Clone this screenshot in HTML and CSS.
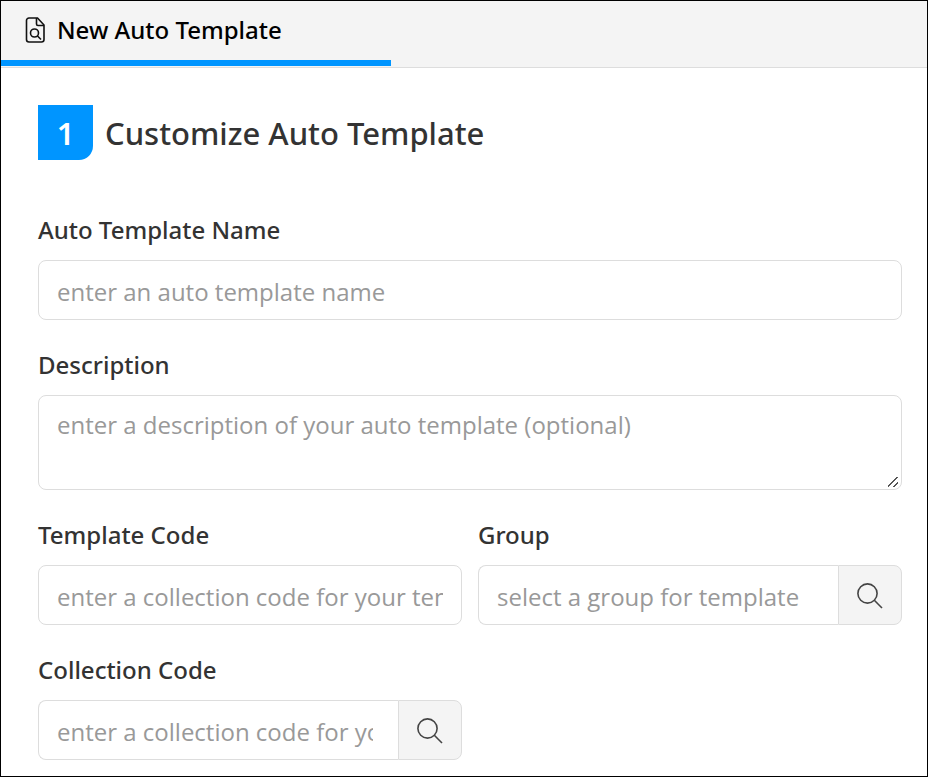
FILE: index.html
```html
<!DOCTYPE html>
<html lang="en">
<head>
  <meta charset="utf-8">
  <meta name="viewport" content="width=device-width, initial-scale=1">
  <title>New Auto Template</title>
  <link rel="stylesheet" href="styles.css">
</head>
<body>
  <div class="panel">
    <header class="tab-bar">
      <h1 class="tab">
        <svg class="tab-icon" viewBox="0 0 20 26" aria-hidden="true">
          <path d="M12.5 1H4a2.5 2.5 0 0 0-2.500 2.500v19A2.500 2.500 0 0 0 4 25h12.500a2.500 2.500 0 0 0 2.500-2.500V8z"/>
          <path d="M11.500 1v6a1.500 1.500 0 0 0 1.500 1.500h6"/>
          <circle cx="9.500" cy="16" r="4"/>
          <path d="M12.500 19l3.500 3.500"/>
        </svg>
        <span>New Auto Template</span>
      </h1>
    </header>
    <main class="content">
      <h2 class="step">
        <span class="step-number">1</span>
        <span>Customize Auto Template</span>
      </h2>
      <form class="form">
        <div class="field field-wide">
          <label for="name">Auto Template Name</label>
          <input class="control" id="name" type="text" placeholder="enter an auto template name">
        </div>
        <div class="field field-wide">
          <label for="description">Description</label>
          <textarea class="control control-area" id="description" placeholder="enter a description of your auto template (optional)"></textarea>
        </div>
        <div class="field">
          <label for="template-code">Template Code</label>
          <input class="control" id="template-code" type="text" placeholder="enter a collection code for your template">
        </div>
        <div class="field">
          <label for="group">Group</label>
          <div class="lookup">
            <input class="control" id="group" type="text" placeholder="select a group for template">
            <button class="lookup-button" type="button" aria-label="Search groups">
              <svg class="search-icon" viewBox="0 0 26 26" aria-hidden="true">
                <circle cx="10.500" cy="11.500" r="9.600"/>
                <path d="M17.300 18.300L25 26"/>
              </svg>
            </button>
          </div>
        </div>
        <div class="field">
          <label for="collection-code">Collection Code</label>
          <div class="lookup">
            <input class="control" id="collection-code" type="text" placeholder="enter a collection code for your template">
            <button class="lookup-button" type="button" aria-label="Search collections">
              <svg class="search-icon" viewBox="0 0 26 26" aria-hidden="true">
                <circle cx="10.500" cy="11.500" r="9.600"/>
                <path d="M17.300 18.300L25 26"/>
              </svg>
            </button>
          </div>
        </div>
      </form>
    </main>
  </div>
</body>
</html>
```
FILE: styles.css
```css
* {
  box-sizing: border-box;
}

body {
  margin: 0;
  background: #fff;
  color: #333;
  font-family: "Noto Sans", "Open Sans", sans-serif;
  font-size: 24px;
  line-height: 34px;
}

h1,
h2 {
  margin: 0;
  font-weight: 500;
}

.panel {
  min-height: 100vh;
  border: 1px solid #000;
}

.tab-bar {
  padding-bottom: 1px;
  border-bottom: 1px solid #ddd;
  background: #f4f4f4;
}

.tab {
  display: flex;
  align-items: center;
  gap: 12px;
  width: 390px;
  max-width: 100%;
  height: 65px;
  padding: 0 24px 1px;
  border-bottom: 6px solid #0095ff;
  color: #000;
  font-size: 24px;
  font-weight: 500;
}

.tab-icon {
  width: 20px;
  height: 26px;
  fill: none;
  stroke: #111;
  stroke-width: 1.6;
}

.content {
  padding: 37px 25px 16px 37px;
}

.step {
  display: flex;
  align-items: center;
  gap: 12px;
  margin-bottom: 53px;
  font-size: 31px;
}

.step-number {
  display: grid;
  place-items: center;
  width: 55px;
  height: 55px;
  border-bottom-right-radius: 14px;
  background: #0095ff;
  color: #fff;
  font-weight: 600;
}

.form {
  display: grid;
  grid-template-columns: repeat(2, minmax(0, 1fr));
  gap: 28px 16px;
}

.field {
  display: flex;
  flex-direction: column;
  gap: 13px;
}

.field-wide {
  grid-column: 1 / -1;
}

.field label {
  font-weight: 500;
}

.control {
  width: 100%;
  min-width: 0;
  height: 60px;
  margin: 0;
  padding: 3px 18px 0;
  border: 1px solid #ddd;
  border-radius: 8px;
  background: #fff;
  color: #333;
  font: inherit;
  font-family: "Open Sans", "Noto Sans", sans-serif;
}

.control::placeholder {
  color: #999;
  opacity: 1;
}

.control-area {
  display: block;
  height: 95px;
  padding-top: 12px;
  resize: vertical;
}

.control-area::-webkit-scrollbar {
  width: 14px;
}

/* Two diagonal grip strokes in the resize corner. */
.control-area::-webkit-resizer {
  background: linear-gradient(135deg, transparent 43%, #555 43% 53%, transparent 53% 72%, #555 72% 82%, transparent 82%) 2px 3px / 10px 10px no-repeat;
}

.lookup {
  display: flex;
}

.lookup .control {
  flex: 1;
  padding-right: 25px;
  border-right: 0;
  border-radius: 8px 0 0 8px;
}

.lookup-button {
  display: grid;
  flex: none;
  place-items: center;
  width: 64px;
  padding: 0;
  border: 1px solid #ddd;
  border-radius: 0 8px 8px 0;
  background: #f4f4f4;
}

.search-icon {
  width: 26px;
  height: 26px;
  overflow: visible;
  fill: none;
  stroke: #444;
  stroke-width: 1.6;
}
```
